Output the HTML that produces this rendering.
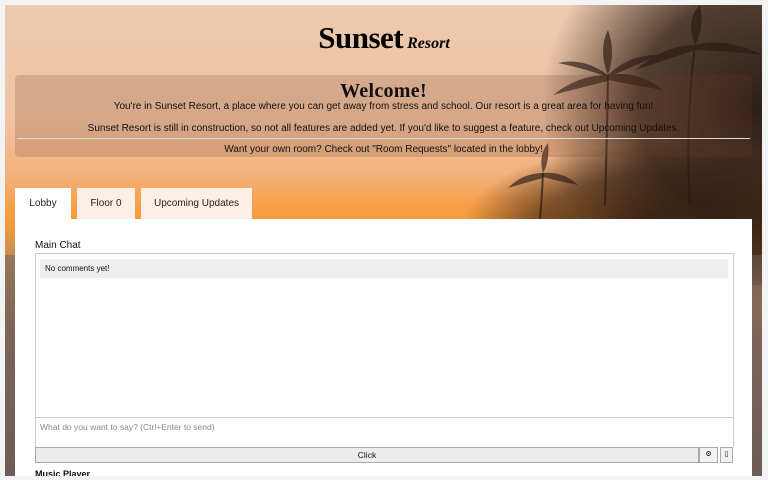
<!DOCTYPE html>
<html><head><style>
body{margin:0;width:768px;height:480px;overflow:hidden;background:#f3f3f3;font-family:"Liberation Sans",sans-serif;position:relative}
#bg{position:absolute;left:5px;top:5px;width:757px;height:475px;overflow:hidden;
background:linear-gradient(180deg,#eccab0 0%,#f0c2a0 25%,#f4b07a 36%,#f7a04a 42%,#f59a3a 46%,#b8885e 55%,#8a6a5a 70%,#6a5a55 100%)}
.abs{position:absolute}
#welcome{left:15px;top:75px;width:737px;height:82px;background:rgba(110,60,40,0.2);border-radius:4px;text-align:center;font-size:10px;color:#111}
h1{margin:0;font-family:"Liberation Serif",serif;font-weight:900;font-size:20px;padding-top:5px;line-height:22px;letter-spacing:.3px}
.tab{position:absolute;top:188px;height:31px;font-size:10px;line-height:31px;text-align:center;color:#222}
#panel{left:15px;top:219px;width:737px;height:261px;background:#fff}
</style></head><body>
<div id="bg">
<div class="abs" style="left:540px;top:-60px;width:330px;height:360px;background:radial-gradient(ellipse at 65% 45%,rgba(35,22,15,.95) 0%,rgba(45,28,18,.8) 40%,rgba(60,35,25,0) 72%)"></div>
<div class="abs" style="left:460px;top:140px;width:320px;height:140px;background:radial-gradient(ellipse at 60% 60%,rgba(35,22,15,.85) 0%,rgba(45,28,18,.6) 45%,rgba(60,35,25,0) 72%)"></div>
<svg class="abs" style="left:0;top:0" width="757" height="475">
<g stroke="#2a1a12" stroke-width="2" fill="none" opacity=".7">
<path d="M600 200 Q602 130 603 70"/>
<path d="M535 215 Q537 190 538 168"/>
<path d="M685 200 Q680 120 690 40"/>
</g>
<g fill="#2a1a12" opacity=".65">
<path d="M603 70 q-30 0-55 20 q30-8 55-14z M603 70 q30-5 55 15 q-30-5-55-10z M603 70 q-10-25 0-45 q8 22 0 45z M603 70 q20-20 50-20 q-25 12-50 22z M603 70 q-25-18-50-12 q25 5 50 14z"/>
<path d="M538 168 q-20 0-35 15 q20-6 35-10z M538 168 q20-2 35 12 q-20-4-35-8z M538 168 q-5-18 5-30 q2 18-5 30z"/>
<path d="M690 40 q-30 0-60 25 q30-10 60-20z M690 40 q30-8 67 10 q-35-4-67-5z M690 40 q-10-25 5-40 q5 22-5 40z"/>
</g>
<rect x="0" y="250" width="757" height="225" fill="#6e5d55" opacity=".5"/>
</svg>
</div>
<div class="abs" style="left:0;top:20px;width:768px;text-align:center;font-family:'Liberation Serif',serif;font-weight:900;color:#000">
<span style="font-size:31px;letter-spacing:-0.5px">Sunset</span> <span style="font-size:16px;font-style:italic">Resort</span></div>
<div id="welcome" class="abs">
<h1>Welcome!</h1>
<div style="margin-top:-1px">You're in Sunset Resort, a place where you can get away from stress and school. Our resort is a great area for having fun!</div>
<div style="margin-top:11px">Sunset Resort is still in construction, so not all features are added yet. If you'd like to suggest a feature, check out Upcoming Updates.</div>
<div style="border-top:1px solid #ddd;margin:4px 2px 0;padding-top:5px">Want your own room? Check out "Room Requests" located in the lobby!</div>
</div>
<div class="tab" style="left:15px;width:56px;background:#fff">Lobby</div>
<div class="tab" style="left:77px;width:58px;background:#fcefe6">Floor 0</div>
<div class="tab" style="left:141px;width:111px;background:#fcefe6">Upcoming Updates</div>
<div id="panel" class="abs"></div>
<div class="abs" style="left:35px;top:240px;font-size:10px;color:#111">Main Chat</div>
<div class="abs" style="left:35px;top:253px;width:697px;height:193px;border:1px solid #ccc;border-bottom:none;background:#fff"></div>
<div class="abs" style="left:40px;top:259px;width:688px;height:19px;background:#eee;font-size:8px;line-height:19px;text-indent:5px;color:#111">No comments yet!</div>
<div class="abs" style="left:35px;top:417px;width:698px;border-top:1px solid #ccc"></div>
<div class="abs" style="left:40px;top:422px;font-size:8.5px;color:#888">What do you want to say? (Ctrl+Enter to send)</div>
<div class="abs" style="left:35px;top:447px;width:662px;height:14px;background:#ececec;border:1px solid #aaa;font-size:8.5px;line-height:14px;text-align:center;color:#111">Click</div>
<div class="abs" style="left:699px;top:447px;width:17px;height:14px;background:#f2f2f2;border:1px solid #aaa;font-size:7px;line-height:14px;text-align:center">⚙</div>
<div class="abs" style="left:720px;top:447px;width:11px;height:14px;background:#f2f2f2;border:1px solid #aaa;font-size:7px;line-height:14px;text-align:center">▯</div>
<div class="abs" style="left:35px;top:469px;font-size:9px;font-weight:bold;color:#111">Music Player</div>
<div class="abs" style="left:0;top:476px;width:768px;height:4px;background:#f3f3f3"></div>
</body></html>
